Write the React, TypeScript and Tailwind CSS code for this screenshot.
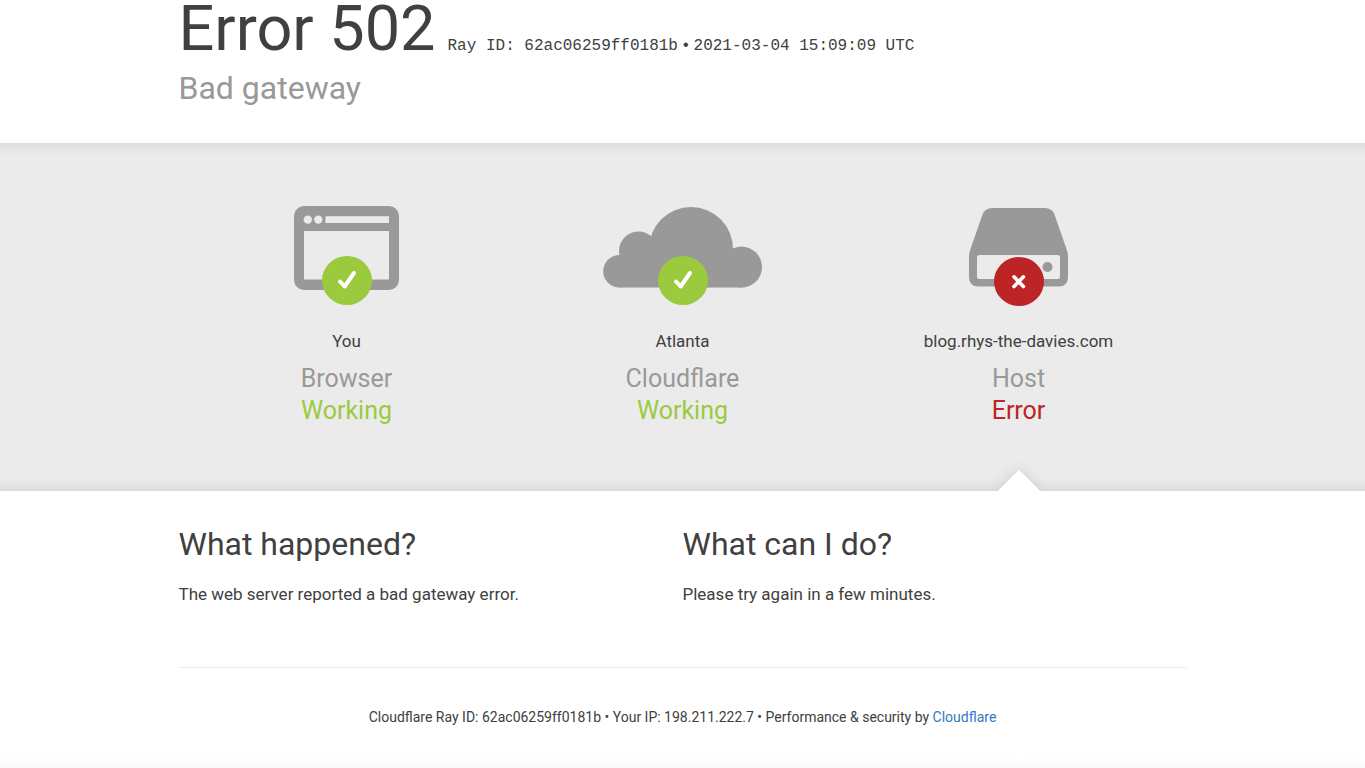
import type { ReactNode } from "react";

function Badge({ ok }: { ok: boolean }) {
  return (
    <svg
      viewBox="0 0 50 50"
      className="absolute top-[50px] left-1/2 size-[50px] -translate-x-1/2"
      aria-hidden="true"
    >
      <ellipse cx="25" cy={ok ? 24.5 : 25.5} rx="25" ry="24.5" fill={ok ? "#9bca3e" : "#bd2426"} />
      <path
        d={ok ? "M18 25.500 L22.7 30.5 L32 17" : "M20 20.8 L29.4 30.5 M29.4 20.8 L20 30.5"}
        fill="none"
        stroke="#fff"
        strokeWidth={ok ? 4 : 3.6}
        strokeLinecap="round"
        strokeLinejoin="round"
      />
    </svg>
  );
}

function BrowserIcon() {
  return (
    <svg width="106" height="84" viewBox="0 0 106 84" aria-hidden="true">
      <rect width="105" height="84" rx="10" fill="#999" />
      <circle cx="13.8" cy="13.6" r="4.2" fill="#ebebeb" />
      <circle cx="24.3" cy="13.6" r="4.2" fill="#ebebeb" />
      <path d="M31.5 10.3H95V17H31.5ZM10 25H95V73.500H10Z" fill="#ebebeb" />
    </svg>
  );
}

function CloudIcon() {
  return (
    <svg width="160" height="84" viewBox="0 0 160 84" fill="#999" aria-hidden="true">
      <circle cx="16.5" cy="65.3" r="16.3" />
      <circle cx="35.5" cy="45" r="19.5" />
      <circle cx="88" cy="43" r="42" />
      <circle cx="138.500" cy="61.1" r="20.5" />
      <path d="M16.5 55H138.500V81.6H16.5Z" />
    </svg>
  );
}

function HostIcon() {
  return (
    <svg width="100" height="84" viewBox="0 0 100 84" aria-hidden="true">
      <path
        fillRule="evenodd"
        d="M23 2H76Q83 2 85.500 8.500L97.500 43Q99 47 99 51V71Q99 80.500 89.500 80.500H9.500Q0 80.500 0 71V51Q0 47 1.500 43L13.500 8.500Q16 2 23 2ZM10.500 49Q8 49 8 51.500V70.500Q8 73 10.500 73H88.500Q91 73 91 70.500V51.500Q91 49 88.500 49Z"
        fill="#999"
      />
      <circle cx="78.500" cy="61" r="5" fill="#999" />
    </svg>
  );
}

type StatusProps = {
  icon: ReactNode;
  place: string;
  label: string;
  ok: boolean;
};

function Status({ icon, place, label, ok }: StatusProps) {
  return (
    <div className="relative pt-[63px] pb-16 text-center">
      <div className="relative flex h-[111px] justify-center">
        {icon}
        <Badge ok={ok} />
      </div>
      <p className="mt-3 text-[17px] leading-6">{place}</p>
      <h3 className="mt-[10px] text-[25px] leading-8 text-[#999]">{label}</h3>
      <p className={`text-[25px] leading-8 ${ok ? "text-[#9bca3e]" : "text-[#bd2426]"}`}>
        {ok ? "Working" : "Error"}
      </p>
      {!ok && (
        <div className="absolute -bottom-[15px] left-1/2 size-[30px] -translate-x-1/2 rotate-45 bg-white shadow-[0_0_14px_#ccc]" />
      )}
    </div>
  );
}

export default function App() {
  return (
    <div className="min-h-screen bg-white bg-[linear-gradient(to_top,#fafafa,#fff_12px)] font-['Roboto',sans-serif] text-[#404040]">
      <header className="mx-auto max-w-[1008px] pb-[35px]">
        <div className="flex items-baseline gap-3">
          <h1 className="text-[63px] leading-[58px]">Error 502</h1>
          <p className="flex items-baseline gap-[5px] font-['Liberation_Mono',monospace] text-[16px] leading-4">
            <span>Ray ID: 62ac06259ff0181b</span>
            <span className="font-['Liberation_Sans',sans-serif]">&bull;</span>
            <span>2021-03-04 15:09:09 UTC</span>
          </p>
        </div>
        <h2 className="mt-[10px] text-[32px] leading-10 text-[#999]">Bad gateway</h2>
      </header>

      <section className="overflow-hidden bg-[#ebebeb] bg-[linear-gradient(to_bottom,#dcdcdc,#e4e4e4_5px,#ebebeb_12px,#ebebeb_calc(100%-12px),#e4e4e4_calc(100%-5px),#dcdcdc)]">
        <div className="mx-auto grid max-w-[1008px] grid-cols-3">
          <Status icon={<BrowserIcon />} place="You" label="Browser" ok />
          <Status icon={<CloudIcon />} place="Atlanta" label="Cloudflare" ok />
          <Status icon={<HostIcon />} place="blog.rhys-the-davies.com" label="Host" ok={false} />
        </div>
      </section>

      <main className="mx-auto grid max-w-[1008px] grid-cols-2 pt-[33px] pb-[61px]">
        <section>
          <h2 className="text-[32px] leading-10">What happened?</h2>
          <p className="mt-[18px] text-[17px] leading-6">The web server reported a bad gateway error.</p>
        </section>
        <section>
          <h2 className="text-[32px] leading-10">What can I do?</h2>
          <p className="mt-[18px] text-[17px] leading-6">Please try again in a few minutes.</p>
        </section>
      </main>

      <footer className="mx-auto max-w-[1008px] border-t border-[#ebebeb] pt-[39px] pb-8 text-center text-[14px] leading-5">
        Cloudflare Ray ID: 62ac06259ff0181b &bull; Your IP: 198.211.222.7 &bull; Performance &amp; security by{" "}
        <a href="https://www.cloudflare.com/" className="text-[#2f7bbf]">
          Cloudflare
        </a>
      </footer>
    </div>
  );
}
